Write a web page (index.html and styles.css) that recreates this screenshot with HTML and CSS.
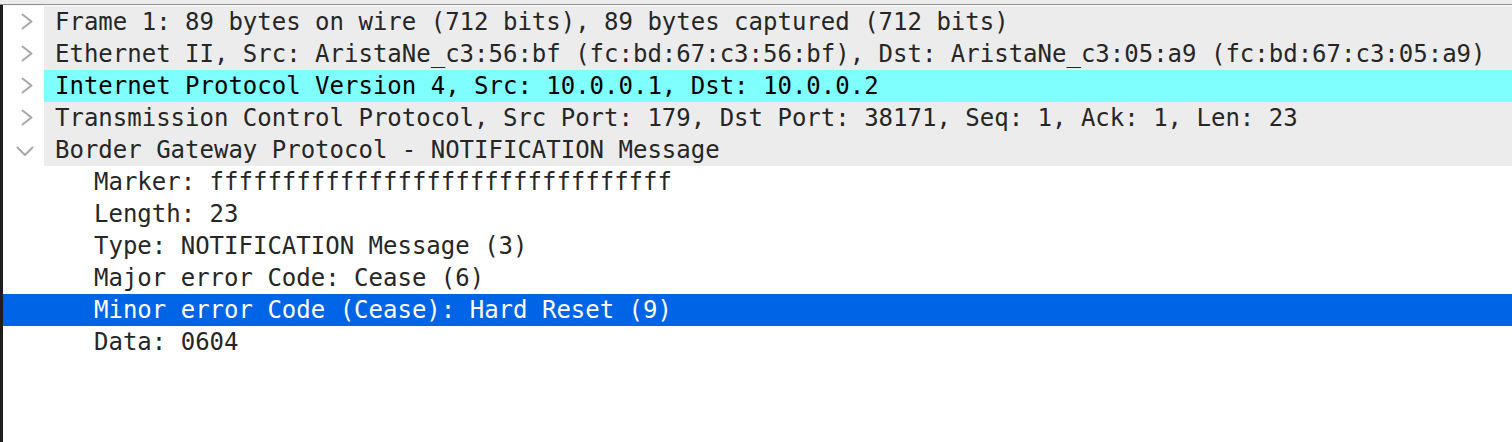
FILE: index.html
```html
<!DOCTYPE html>
<html lang="en">
<head>
    <meta charset="UTF-8">
    <title>Packet Details</title>
    <link rel="stylesheet" href="styles.css">
</head>
<body>
    <div class="topbar"></div>
    <div class="tree">
        <div class="row">
            <span class="toggle"><svg width="41" height="32" viewBox="0 0 41 32"><polyline points="19.5,8.5 28.5,15.5 19.5,22.5" /></svg></span>
            <span class="label shaded">Frame 1: 89 bytes on wire (712 bits), 89 bytes captured (712 bits)</span>
        </div>
        <div class="row">
            <span class="toggle"><svg width="41" height="32" viewBox="0 0 41 32"><polyline points="19.5,8.5 28.5,15.5 19.5,22.5" /></svg></span>
            <span class="label shaded">Ethernet II, Src: AristaNe_c3:56:bf (fc:bd:67:c3:56:bf), Dst: AristaNe_c3:05:a9 (fc:bd:67:c3:05:a9)</span>
        </div>
        <div class="row">
            <span class="toggle"><svg width="41" height="32" viewBox="0 0 41 32"><polyline points="19.5,8.5 28.5,15.5 19.5,22.5" /></svg></span>
            <span class="label marked">Internet Protocol Version 4, Src: 10.0.0.1, Dst: 10.0.0.2</span>
        </div>
        <div class="row">
            <span class="toggle"><svg width="41" height="32" viewBox="0 0 41 32"><polyline points="19.5,8.5 28.5,15.5 19.5,22.5" /></svg></span>
            <span class="label shaded">Transmission Control Protocol, Src Port: 179, Dst Port: 38171, Seq: 1, Ack: 1, Len: 23</span>
        </div>
        <div class="row">
            <span class="toggle"><svg width="41" height="32" viewBox="0 0 41 32"><polyline points="14.5,13.5 22,21 29.5,13.5" /></svg></span>
            <span class="label shaded">Border Gateway Protocol - NOTIFICATION Message</span>
        </div>
        <div class="row">
            <span class="toggle"></span>
            <span class="label child">Marker: ffffffffffffffffffffffffffffffff</span>
        </div>
        <div class="row">
            <span class="toggle"></span>
            <span class="label child">Length: 23</span>
        </div>
        <div class="row">
            <span class="toggle"></span>
            <span class="label child">Type: NOTIFICATION Message (3)</span>
        </div>
        <div class="row">
            <span class="toggle"></span>
            <span class="label child">Major error Code: Cease (6)</span>
        </div>
        <div class="row selected">
            <span class="toggle"></span>
            <span class="label child">Minor error Code (Cease): Hard Reset (9)</span>
        </div>
        <div class="row">
            <span class="toggle"></span>
            <span class="label child">Data: 0604</span>
        </div>
    </div>
</body>
</html>
```

FILE: styles.css
```css
html, body {
    height: 100%;
}
body {
    margin: 0;
    background-color: #ffffff;
    font-family: "DejaVu Sans Mono", "Liberation Mono", monospace;
    font-size: 24px;
    color: #262626;
    display: flex;
    flex-direction: column;
    overflow: hidden;
}
.topbar {
    height: 4px;
    background-color: #ececec;
    border-bottom: 1px solid #8e8e8e;
    flex-shrink: 0;
}
.tree {
    flex: 1;
    padding-top: 1px;
    border-left: 3px solid #1e1e1e;
    background-color: #ffffff;
}
.row {
    display: flex;
    height: 32px;
    line-height: 32px;
    white-space: nowrap;
}
.toggle {
    width: 41px;
    flex-shrink: 0;
}
.toggle svg {
    display: block;
}
.toggle polyline {
    fill: none;
    stroke: #a8a8a8;
    stroke-width: 2;
    stroke-linecap: round;
    stroke-linejoin: round;
}
.label {
    flex: 1;
    padding-left: 11px;
}
.shaded {
    background-color: #ececec;
}
.marked {
    background-color: #80ffff;
    color: #000000;
}
.child {
    padding-left: 50px;
}
.selected {
    background-color: #0064e6;
    color: #ffffff;
}
```
